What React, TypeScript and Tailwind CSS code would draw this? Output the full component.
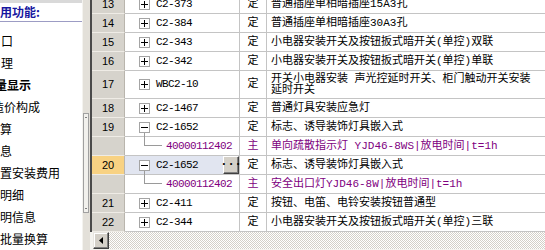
import React from "react";

type Row = {
  n?: string;
  code: string;
  kind?: "定" | "主";
  desc: string[];
  child?: boolean;
  expanded?: boolean;
  tall?: boolean;
  selected?: boolean;
};

const rows: Row[] = [
  { n: "13", code: "C2-373", desc: ["普通插座单相暗插座15A3孔"] },
  { n: "14", code: "C2-384", desc: ["普通插座单相暗插座30A3孔"] },
  { n: "15", code: "C2-343", desc: ["小电器安装开关及按钮扳式暗开关(单控)双联"] },
  { n: "16", code: "C2-342", desc: ["小电器安装开关及按钮扳式暗开关(单控)单联"] },
  { n: "17", code: "WBC2-10", tall: true, desc: ["开关小电器安装 声光控延时开关、柜门触动开关安装", "延时开关"] },
  { n: "18", code: "C2-1467", desc: ["普通灯具安装应急灯"] },
  { n: "19", code: "C2-1652", expanded: true, desc: ["标志、诱导装饰灯具嵌入式"] },
  { code: "40000112402", child: true, kind: "主", desc: ["单向疏散指示灯 YJD46-8WS|放电时间|t=1h"] },
  { n: "20", code: "C2-1652", expanded: true, selected: true, desc: ["标志、诱导装饰灯具嵌入式"] },
  { code: "40000112402", child: true, kind: "主", desc: ["安全出口灯YJD46-8W|放电时间|t=1h"] },
  { n: "21", code: "C2-411", desc: ["按钮、电笛、电铃安装按钮普通型"] },
  { n: "22", code: "C2-344", desc: ["小电器安装开关及按钮扳式暗开关(单控)三联"] },
];

function ToggleBox({ open }: { open?: boolean }) {
  return (
    <div className="relative w-[11px] h-[11px] shrink-0 border border-[#a4a4a4] bg-white">
      <svg width="9" height="9" viewBox="0 0 9 9" className="block">
        <line x1="1" y1="4.5" x2="8" y2="4.5" stroke="#000" strokeWidth="1" />
        {!open && <line x1="4.5" y1="1" x2="4.5" y2="8" stroke="#000" strokeWidth="1" />}
      </svg>
      {open && <div className="absolute left-[4px] top-[10px] w-px h-[6px] bg-[#9a9a9a]" />}
    </div>
  );
}

function GridRow({ r }: { r: Row }) {
  const purple = r.child;
  const txt = purple ? "text-[#800080]" : "text-black";
  return (
    <div className={`flex shrink-0 ${r.tall ? "h-[28px]" : "h-[19px]"}`}>
      {/* row header */}
      <div
        className={`w-[33px] shrink-0 flex items-center justify-center border-b border-r border-b-[#efece6] border-r-[#b9b5ad] font-['Liberation_Sans',sans-serif] text-[11px] text-black ${
          r.selected ? "bg-[#f8d283]" : "bg-[#d6d3cc]"
        }`}
      >
        {r.n}
      </div>
      {/* tree column */}
      <div
        className={`w-[115px] shrink-0 flex border-b border-r border-[#c4c4c4] ${r.selected ? "bg-[#e1e5f0]" : "bg-white"}`}
      >
        {r.child ? (
          <>
            <div className="w-[19px] shrink-0" />
            <div className="w-[18px] h-1/2 shrink-0 border-l border-b border-[#9a9a9a]" />
            <div className={`ml-[4px] flex items-center tracking-[-0.6px] ${txt}`}>{r.code}</div>
          </>
        ) : (
          <>
            <div className="w-[14px] shrink-0" />
            <div className="flex items-center">
              <ToggleBox open={r.expanded} />
            </div>
            <div className="ml-[6px] flex-1 flex items-center tracking-[-0.6px] text-black">{r.code}</div>
            {r.selected && (
              <div className="w-[16px] h-full shrink-0 bg-[#d4d0c8] border-t border-l border-white border-b border-r border-b-[#404040] border-r-[#404040] shadow-[inset_-1px_-1px_0_#808080] flex items-center justify-center font-bold text-[12px] leading-none text-black">
                ···
              </div>
            )}
          </>
        )}
      </div>
      {/* type column */}
      <div className={`w-[27px] shrink-0 flex items-center justify-center border-b border-r border-[#c4c4c4] bg-white ${txt}`}>
        {r.kind ?? "定"}
      </div>
      {/* description */}
      <div className={`flex-1 min-w-0 overflow-hidden flex flex-col justify-center pl-[4px] border-b border-[#c4c4c4] bg-white ${txt}`}>
        {r.desc.map((d, i) => (
          <div key={i} className="whitespace-nowrap leading-[11px]">
            {d}
          </div>
        ))}
      </div>
    </div>
  );
}

const sideItems: { t: string; bold?: boolean; shift?: string }[] = [
  { t: "口", shift: "ml-[1px]" },
  { t: "理", shift: "ml-[1px]" },
  { t: "量显示", bold: true, shift: "ml-[-5px]" },
  { t: "造价构成", shift: "ml-[-8px]" },
  { t: "算" },
  { t: "息" },
  { t: "置安装费用" },
  { t: "明细" },
  { t: "明信息" },
  { t: "批量换算" },
];

export default function App() {
  return (
    <div className="w-[545px] h-[250px] flex overflow-hidden bg-white select-none">
      {/* left function panel */}
      <div className="w-[82px] shrink-0 flex flex-col overflow-hidden bg-white font-['Noto_Sans_CJK_SC',sans-serif] text-[12px] text-black">
        <div className="h-[3px] bg-[#d9d9d9]" />
        <div className="h-[22px] flex items-center border-b border-[#9c9cc4] font-bold text-[#1616a0] whitespace-nowrap">
          用功能:
        </div>
        <div className="pt-[8px] flex flex-col">
          {sideItems.map((s, i) => (
            <div key={i} className={`h-[22px] flex items-center whitespace-nowrap ${s.bold ? "font-bold" : ""}`}>
              <span className={s.shift ?? ""}>{s.t}</span>
            </div>
          ))}
        </div>
      </div>

      {/* left panel scrollbar strip */}
      <div className="w-[8px] shrink-0 flex flex-col bg-[#e3e0d9] border-l border-[#f4f3ef]">
        <div className="h-[113px] shrink-0" />
        <div className="w-[6px] h-[100px] border border-[#a0a0a0] bg-[#f2f1ed] flex flex-col justify-between items-center py-[3px]">
          <div className="w-[2px] h-px bg-[#808080]" />
          <div className="w-[2px] h-px bg-[#808080]" />
        </div>
      </div>

      {/* main grid */}
      <div className="flex-1 min-w-0 flex flex-col">
        <div className="h-[232px] overflow-hidden flex flex-col border-l-2 border-[#4a4a4a] font-['Liberation_Mono','Noto_Sans_CJK_SC',monospace] text-[11px] leading-[11px]">
          <div className="-mt-[5px] flex flex-col">
            {rows.map((r, i) => (
              <GridRow key={i} r={r} />
            ))}
          </div>
        </div>
        {/* horizontal scrollbar */}
        <div className="h-[18px] flex pl-[3px] bg-[#f4f3ef]">
          <div className="w-[16px] h-[17px] shrink-0 bg-[#d4d0c8] border-t border-l border-[#e8e6e0] border-b border-r border-b-[#404040] border-r-[#404040] shadow-[inset_-1px_-1px_0_#808080,inset_1px_1px_0_#ffffff] flex items-center justify-center">
            <svg width="4" height="7" viewBox="0 0 4 7">
              <polygon points="4,0 0,3.5 4,7" fill="#000" />
            </svg>
          </div>
          <div className="flex-1 h-[17px] bg-[repeating-conic-gradient(#d4d0c8_0%_25%,#ffffff_0%_50%)] bg-[length:2px_2px]" />
        </div>
      </div>
    </div>
  );
}
